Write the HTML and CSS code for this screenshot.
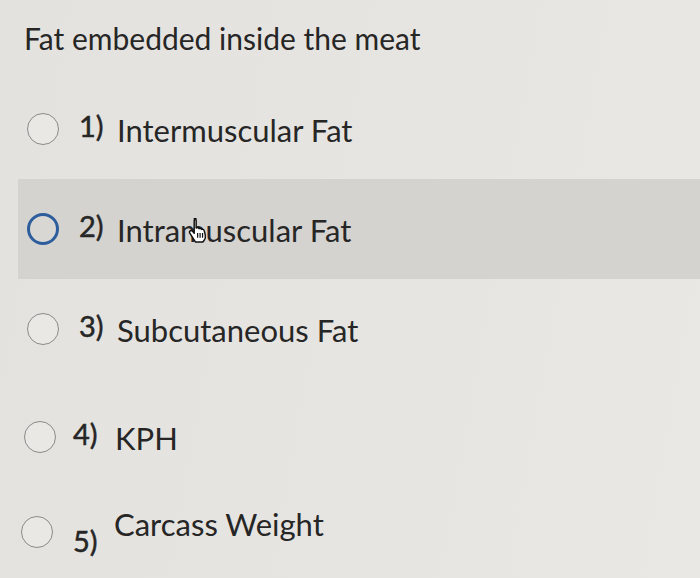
FILE: index.html
```html
<!DOCTYPE html>
<html>
<head>
<meta charset="utf-8">
<link rel="stylesheet" href="styles.css">
</head>
<body>
<div class="page">
  <div class="question">Fat embedded inside the meat</div>
  <ul class="options">
    <li class="option">
      <span class="radio"></span>
      <span class="num">1)</span>
      <span class="label">Intermuscular Fat</span>
    </li>
    <li class="option option-hover">
      <span class="radio radio-focus"></span>
      <span class="num">2)</span>
      <span class="label label-cursor">Intramuscular Fat
        <svg class="cursor" width="21" height="27" viewBox="0 0 16 22">
          <path d="M4.5 1.5c1 0 1.6.7 1.6 1.6V9l.4-.2c.8-.4 1.7 0 2 .7.8-.5 1.8-.2 2.1.6.8-.4 1.8 0 2 .9l.9 3.6c.4 1.6 0 3.2-1 4.5l-1 1.3H5.6l-3-4.6-1.7-2.6c-.5-.8-.2-1.7.6-2 .6-.3 1.3 0 1.7.5l1.3 1.6V3.1c0-.9.6-1.6 1.5-1.6z" fill="#fff" stroke="#111" stroke-width="1.2" stroke-linejoin="round"/>
          <path d="M7.3 13v4M9.3 13v4M11.3 13v4" stroke="#111" stroke-width="1" />
        </svg>
      </span>
    </li>
    <li class="option">
      <span class="radio"></span>
      <span class="num">3)</span>
      <span class="label">Subcutaneous Fat</span>
    </li>
    <li class="option option-4">
      <span class="radio"></span>
      <span class="num">4)</span>
      <span class="label">KPH</span>
    </li>
    <li class="option option-5">
      <span class="radio"></span>
      <span class="num num-low">5)</span>
      <span class="label label-high">Carcass Weight</span>
    </li>
  </ul>
</div>
</body>
</html>
```
FILE: styles.css
```css
html, body {
  margin: 0;
  padding: 0;
}
body {
  width: 700px;
  height: 578px;
  overflow: hidden;
  background: linear-gradient(100deg, #e4e2de 0%, #e7e5e1 60%, #eae8e4 100%);
  font-family: Lato, "Open Sans", sans-serif;
  color: #262626;
}
.page {
  padding-left: 18px;
}
.question {
  height: 79px;
  box-sizing: border-box;
  padding: 21px 0 0 6px;
  font-size: 30px;
  line-height: 34px;
}
.options {
  list-style: none;
  margin: 0;
  padding: 0;
}
.option {
  height: 100px;
  display: flex;
  align-items: center;
  padding-left: 9px;
}
.option-hover {
  background: #d5d3cf;
}
.radio {
  width: 32px;
  height: 32px;
  box-sizing: border-box;
  border-radius: 50%;
  border: 1.5px solid #8a8a88;
  background: #e9e8e5;
  flex: none;
}
.radio-focus {
  border: 3px solid #2d5d9c;
  background: #d9d7d3;
}
.num {
  width: 38px;
  margin-left: 20px;
  font-size: 29px;
  line-height: 34px;
  margin-top: -6px;
  -webkit-text-stroke: 0.5px #262626;
}
.label {
  font-size: 31px;
  line-height: 36px;
  margin-top: 2px;
}
.label-cursor {
  position: relative;
}
.cursor {
  position: absolute;
  left: 71px;
  top: 5px;
}
.option-4 {
  padding-left: 6px;
  padding-top: 16px;
  box-sizing: border-box;
}
.option-4 .num {
  margin-left: 17px;
  width: 42px;
}
.option-5 {
  padding-left: 3px;
  padding-top: 6px;
  box-sizing: border-box;
}
.option-5 .num {
  margin-left: 20px;
  margin-top: 18px;
  width: 41px;
}
.label-high {
  margin-top: -16px;
}
```
